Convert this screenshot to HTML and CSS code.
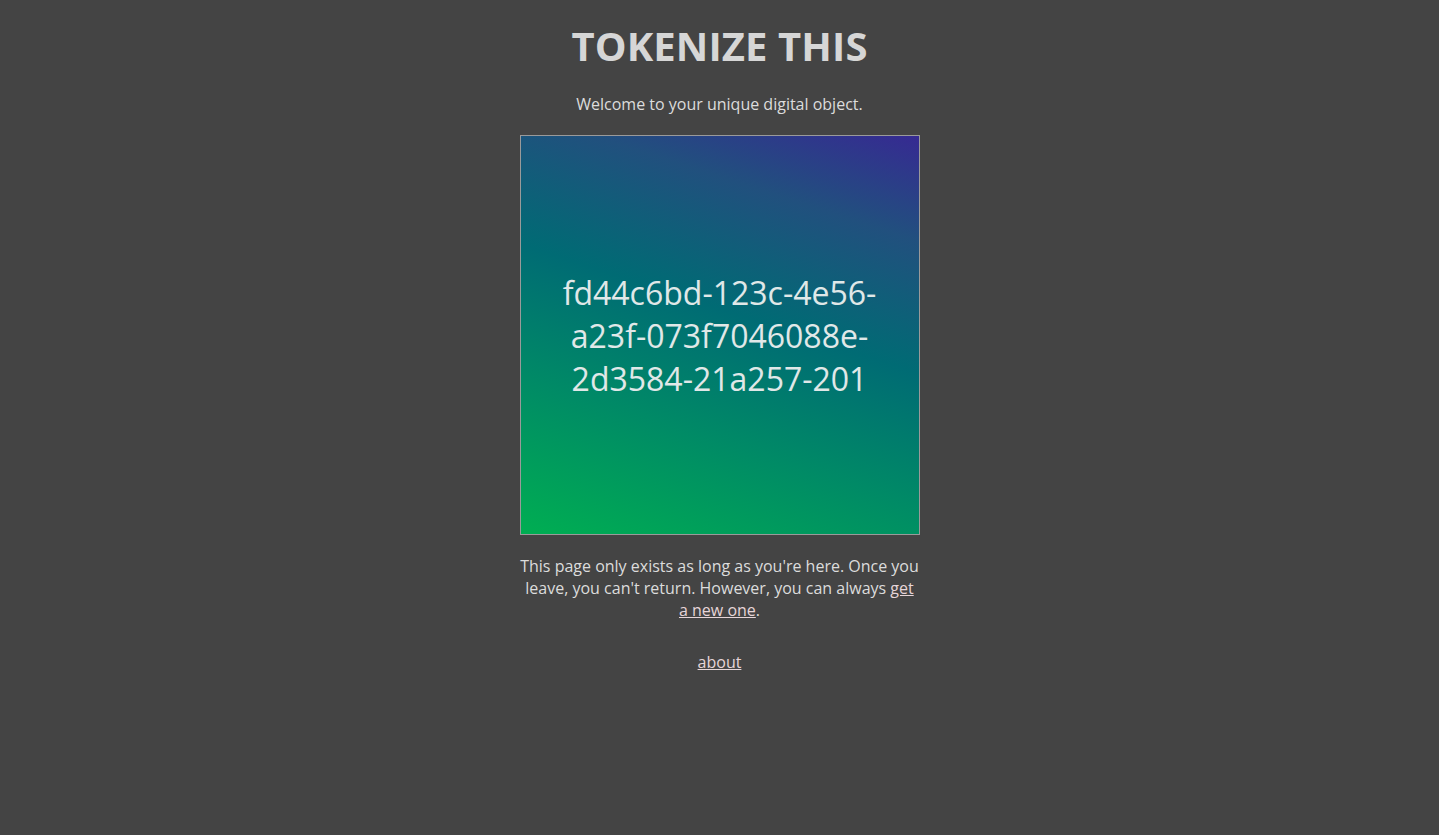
FILE: index.html
```html
<!DOCTYPE html>
<html>
<head>
<meta charset="utf-8">
<title>Tokenize This</title>
<link rel="stylesheet" href="styles.css">
</head>
<body>
<main class="page">
  <h1 class="title">TOKENIZE THIS</h1>
  <p class="welcome">Welcome to your unique digital object.</p>
  <div class="token">
    <span class="token-id">fd44c6bd-123c-4e56-a23f-073f7046088e-2d3584-21a257-201</span>
  </div>
  <p class="note">This page only exists as long as you're here. Once you leave, you can't return. However, you can always <a href="#">get a new one</a>.</p>
  <p class="about"><a href="#">about</a></p>
</main>
</body>
</html>
```

FILE: styles.css
```css
html, body {
  margin: 0;
  padding: 0;
  background: #444444;
  height: 100%;
}
body {
  font-family: "Open Sans", "Noto Sans", sans-serif;
  color: #dcdcdc;
}
.page {
  display: flex;
  flex-direction: column;
  align-items: center;
  padding-top: 22px;
}
.title {
  margin: 0;
  font-size: 40px;
  font-weight: 700;
  line-height: 48px;
  color: #d6d6d6;
  letter-spacing: 0.1px;
}
.welcome {
  margin: 23px 0 0;
  font-size: 16px;
  line-height: 22px;
}
.token {
  margin-top: 20px;
  width: 398px;
  height: 398px;
  border: 1px solid #9a9a9a;
  background: linear-gradient(18deg, #00ae52 0%, #008a66 30%, #006b74 55%, #21507e 80%, #362a92 100%);
  display: flex;
  align-items: center;
  justify-content: center;
  box-sizing: content-box;
}
.token-id {
  width: 340px;
  text-align: center;
  font-size: 32px;
  line-height: 43px;
  color: #e0e8e8;
  margin-top: 0;
}
.note {
  margin: 20px 0 0;
  width: 400px;
  text-align: center;
  font-size: 16px;
  line-height: 22px;
}
.note a, .about a {
  color: #e6d5d8;
  text-decoration: underline;
}
.about {
  margin: 30px 0 0;
  font-size: 16px;
  line-height: 22px;
}
```
